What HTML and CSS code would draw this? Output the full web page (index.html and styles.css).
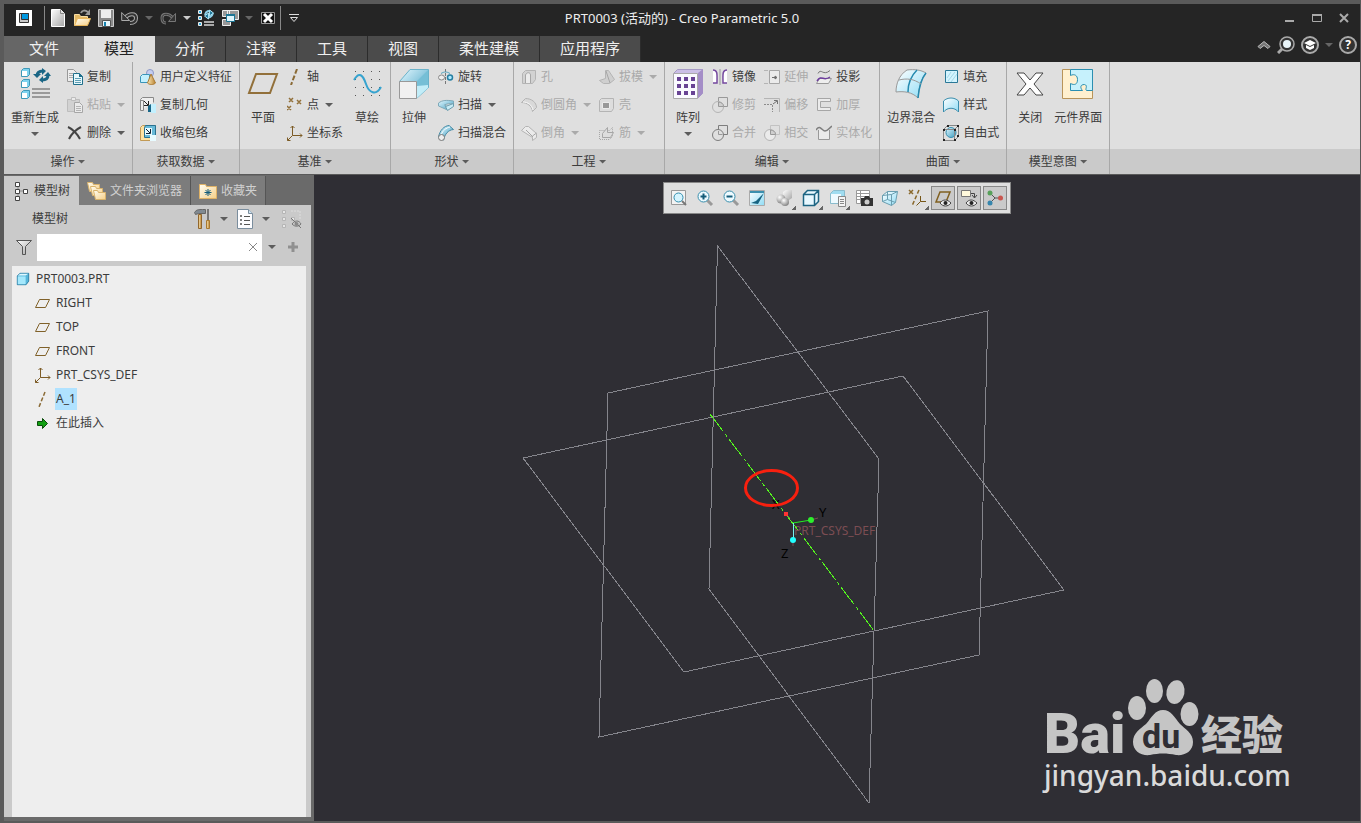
FILE: index.html
```html
<!DOCTYPE html>
<html lang="zh-CN">
<head>
    <meta charset="utf-8">
    <title>PRT0003 (活动的) - Creo Parametric 5.0</title>
    <link rel="stylesheet" href="styles.css">
</head>
<body>
    <!-- Shared gradients -->
    <svg class="defs" width="0" height="0">
        <defs>
            <linearGradient id="blue" x1="0" y1="0" x2="1" y2="1"><stop offset="0" stop-color="#fff"/><stop offset="1" stop-color="#8fdcf5"/></linearGradient>
            <linearGradient id="teal" x1="0" y1="0" x2="1" y2="1"><stop offset="0" stop-color="#e4f8ff"/><stop offset="1" stop-color="#3b9cc0"/></linearGradient>
            <linearGradient id="folder" x1="0" y1="0" x2="1" y2="1"><stop offset="0" stop-color="#fffdf2"/><stop offset="1" stop-color="#f5cf88"/></linearGradient>
            <linearGradient id="gray" x1="0" y1="0" x2="1" y2="1"><stop offset="0" stop-color="#fff"/><stop offset="1" stop-color="#a5a5a5"/></linearGradient>
            <linearGradient id="gold" x1="0" y1="0" x2="1" y2="0"><stop offset="0" stop-color="#fbe7b4"/><stop offset="1" stop-color="#b98232"/></linearGradient>
            <radialGradient id="ball" cx="0.35" cy="0.3" r="0.8"><stop offset="0" stop-color="#fff"/><stop offset="1" stop-color="#777"/></radialGradient>
        </defs>
    </svg>

    <div class="window">
        <header class="titlebar">
            <div class="quick-access">
                <button class="app-button" aria-label="Creo"><svg width="16" height="16" viewBox="0 0 16 16"><path fill="#fff" d="M0 0h16v16H0z"/><path fill="#c8c8c8" stroke="#333" d="M3.500 3.500h9v9h-9z"/><path fill="#0098e0" stroke="#333" d="M5.500 3.500h7v6h-7z"/></svg></button>
                <span class="divider"></span>
                <button aria-label="新建"><svg width="18" height="18" viewBox="0 0 18 18"><path fill="url(#gray)" stroke="#fff" d="M2.500 .5h9l4 4v13h-13z"/><path fill="#ddd" stroke="#888" d="M11.500 .5v4h4"/></svg></button>
                <button aria-label="打开"><svg width="18" height="18" viewBox="0 0 18 18"><path fill="#e1b765" stroke="#f8dda2" d="M1.500 16.500v-11h5l1 2h7v3"/><path fill="url(#folder)" stroke="#e9b75c" d="M1.500 16.500l3-7h13l-3 7z"/><path fill="none" stroke="#999" stroke-width="2" d="M8 4c1-3 4-3 7-1"/><path fill="#999" d="M12 6h5V0z"/></svg></button>
                <button aria-label="保存"><svg width="18" height="18" viewBox="0 0 18 18"><path fill="#8a8a8a" stroke="#ccc" d="M1.500 .5h15v17h-15z"/><path fill="#eee" d="M4 1h10v8H4z"/><path fill="#e8f6fb" stroke="#555" d="M5.500 11.500h8v6h-8z"/><path fill="#1583b0" d="M7 13h2v4H7z"/></svg></button>
                <button aria-label="撤消"><svg width="18" height="16" viewBox="0 0 18 16"><path fill="none" stroke="#aaa" stroke-width="4" d="M4 8c4-5 11-5 11 0 0 3-2 5-6 5"/><path fill="none" stroke="#333" stroke-width="2" d="M4 8c4-5 11-5 11 0 0 3-2 5-6 5"/><path fill="#333" stroke="#aaa" d="M.7 2.500v8h8z"/></svg></button>
                <button class="narrow" aria-label="撤消列表"><span class="caret dim"></span></button>
                <button aria-label="重做"><svg width="18" height="16" viewBox="0 0 18 16"><path fill="none" stroke="#777" stroke-width="3" d="M14 8c-4-5-11-5-11 0 0 3 1 5 4 5"/><path fill="none" stroke="#333" d="M14 8c-4-5-11-5-11 0 0 3 1 5 4 5"/><path fill="#333" stroke="#777" d="M16.500 3.500v8h-7z"/></svg></button>
                <button class="narrow" aria-label="重做列表"><span class="caret light"></span></button>
                <button aria-label="重新生成"><svg width="18" height="18" viewBox="0 0 18 18"><path fill="#35aee0" stroke="#eee" d="M1.500 1.500h3v3h-3zM1.500 7.500h3v3h-3zM1.500 13.500h3v3h-3z"/><path stroke="#aaa" stroke-width="2" d="M7 13h10M7 16h10"/><path fill="none" stroke="#8ed0e8" stroke-width="2" d="M8 6c1-4 4-5 6-3M16 4c-1 4-4 5-6 4"/><path fill="#247a9b" stroke="#aadff0" d="M12.500 1v6l4-3zM11.500 4v6l-4-3z"/></svg></button>
                <button aria-label="窗口"><svg width="18" height="18" viewBox="0 0 18 18"><path fill="#999" stroke="#eee" d="M6.500 1.500h11v9h-11zM1.500 1.500h7v6h-7zM1.500 10.500h8v6h-8z"/><path fill="#dff5fc" stroke="#1c7695" d="M5.500 5.500h8v7h-8z"/><path fill="#1c7695" d="M5 5h9v2H5z"/></svg></button>
                <button class="narrow" aria-label="窗口列表"><span class="caret dim"></span></button>
                <button aria-label="关闭窗口"><svg width="14" height="14" viewBox="0 0 14 14"><path fill="#111" stroke="#999" d="M.5 1.500h13v11H.5z"/><path stroke="#fff" stroke-width="3" d="M3 3l8 8M11 3l-8 8"/></svg></button>
                <span class="divider"></span>
                <button aria-label="自定义"><svg width="10" height="8" viewBox="0 0 10 8"><path fill="none" stroke="#ddd" d="M0 .5h10M1.500 3.500h7l-3.500 4z"/></svg></button>
            </div>
            <h1 class="title">PRT0003 (活动的) - Creo Parametric 5.0</h1>
            <div class="window-buttons">
                <button aria-label="最小化"><svg width="12" height="12" viewBox="0 0 12 12"><path stroke="#aaa" stroke-width="2" d="M1 9h9"/></svg></button>
                <button aria-label="最大化"><svg width="12" height="12" viewBox="0 0 12 12"><path fill="none" stroke="#aaa" d="M1.500 2.500h9v7h-9z"/><path stroke="#aaa" stroke-width="2" d="M1 3h10"/></svg></button>
                <button aria-label="关闭"><svg width="12" height="12" viewBox="0 0 12 12"><path stroke="#aaa" stroke-width="2" d="M2 2l8 8M10 2l-8 8"/></svg></button>
            </div>
        </header>

        <nav class="tabs">
            <button class="tab file-tab">文件</button>
            <button class="tab active">模型</button>
            <button class="tab">分析</button>
            <button class="tab">注释</button>
            <button class="tab">工具</button>
            <button class="tab">视图</button>
            <button class="tab">柔性建模</button>
            <button class="tab">应用程序</button>
            <div class="help-buttons">
                <button aria-label="最小化功能区"><svg width="14" height="10" viewBox="0 0 14 10"><path fill="#777" stroke="#bbb" d="M1 6.500l6-5 6 5-2 2-4-3-4 3z"/></svg></button>
                <button aria-label="搜索"><svg width="18" height="18" viewBox="0 0 18 18"><path stroke="#aaa" stroke-width="3" d="M1 17l5-5"/><circle cx="10" cy="8" r="7" fill="#333" stroke="#aaa" stroke-width="1.500"/><circle cx="10" cy="8" r="4" fill="#e8f4f8"/></svg></button>
                <button aria-label="学习"><svg width="18" height="18" viewBox="0 0 18 18"><circle cx="9" cy="9" r="8" fill="#333" stroke="#aaa" stroke-width="2"/><path fill="#fff" d="M9 4l6 3-6 3-6-3zM5 9l4 2 4-2v3l-4 2-4-2z"/></svg></button>
                <button class="narrow" aria-label="学习列表"><span class="caret dim"></span></button>
                <button class="help" aria-label="帮助">?</button>
            </div>
        </nav>

        <div class="ribbon">
            <section class="group">
                <div class="group-body">
                    <button class="big">
                        <svg width="32" height="32" viewBox="0 0 32 32"><g fill="#7fd2ee" stroke="#3f99b8"><path d="M2.500 2.500l2-2h6v6l-2 2h-6zM2.500 13.500l2-2h6v6l-2 2h-6zM2.500 24.500l2-2h6v6l-2 2h-6z"/></g><path fill="#fff" d="M3 3h5v5H3zM3 14h5v5H3zM3 25h5v5H3z"/><path stroke="#999" stroke-width="2" d="M13 21h18M13 25h18M13 29h18"/><path fill="none" stroke="#1a6685" stroke-width="3" d="M18 8c0-4 3-5 6-5M29 7c0 4-3 5-6 5"/><path fill="#1a6685" d="M23 0v7l4-4zM24 8v7l-4-3zM14 6h8l-4 4zM25 8h7l-3-4z"/></svg>
                        <span>重新生成</span><i class="caret"></i>
                    </button>
                    <div class="column">
                        <button class="small"><svg width="16" height="16" viewBox="0 0 16 16"><path fill="#eee" stroke="#999" d="M.5 .5h6l3 3v9h-9z"/><path stroke="#aaa" d="M2 4.500h4M2 6.500h4M2 8.500h4"/><path fill="#e6f7fb" stroke="#1f6f8b" d="M6.500 4.500h6l3 3v8h-9z"/><path stroke="#5f9fb5" d="M8 9.500h6M8 11.500h6M8 13.500h6"/><path fill="#1f6f8b" d="M12 4v4h4z"/></svg>复制</button>
                        <button class="small" disabled><svg width="16" height="16" viewBox="0 0 16 16"><path fill="#d0d0d0" stroke="#b5b5b5" d="M.5 2.500h12v12H.5z"/><path fill="#eee" stroke="#b5b5b5" d="M4.500 .5h4v3h-4z"/><path fill="#eee" stroke="#999" d="M7.500 5.500h5l3 3v7h-8z"/><path stroke="#aaa" d="M9 9.500h5M9 11.500h5M9 13.500h5"/></svg>粘贴<i class="caret"></i></button>
                        <button class="small"><svg width="16" height="16" viewBox="0 0 16 16"><path fill="none" stroke="#444" stroke-width="2" d="M1 2c5 2 10 8 12 12M14 2C8 5 4 10 2 14"/></svg>删除<i class="caret"></i></button>
                    </div>
                </div>
                <h2>操作<i class="caret"></i></h2>
            </section>

            <section class="group">
                <div class="group-body">
                    <div class="column">
                        <button class="small"><svg width="16" height="16" viewBox="0 0 16 16"><circle cx="10" cy="4" r="3.500" fill="#c5cdf0" stroke="#8b97c6"/><path fill="#c3f0fe" stroke="#3a94b8" d="M.5 7.500l2-2h7v6l-2 2h-7z"/><path fill="url(#gold)" stroke="#a87832" d="M11 5l4.500 9c-2 2-6 2-8 0z"/></svg>用户定义特征</button>
                        <button class="small"><svg width="16" height="16" viewBox="0 0 16 16"><path fill="#eee" stroke="#888" d="M.5 13.500v-11l2-2h11v5M.5 3.500h3v10h-3"/><path fill="#c3f0fe" d="M11 7h5v9h-5z"/><path fill="#1a6788" d="M8 9l3-2v8H8z"/><path fill="none" stroke="#222" d="M4 4l4 4M8.500 4v4.500H4"/></svg>复制几何</button>
                        <button class="small"><svg width="16" height="16" viewBox="0 0 16 16"><path fill="#ffe2a2" stroke="#c29a55" d="M.5 2.500l2-2h13v12l-3 3H.5z"/><path fill="#68bad8" stroke="#2a7291" d="M4.500 2.500l1-2h10v10l-2 2h-9z"/><path fill="#e8fbff" d="M5 3h7v7H5zM10 10h6v6h-6z"/><path fill="none" stroke="#123" d="M6 4l4 4M10.500 4v4.500H6"/></svg>收缩包络</button>
                    </div>
                </div>
                <h2>获取数据<i class="caret"></i></h2>
            </section>

            <section class="group">
                <div class="group-body">
                    <button class="big">
                        <svg width="32" height="32" viewBox="0 0 32 32"><path fill="none" stroke="#92703a" stroke-width="2" d="M9 6h21l-7 19H2z"/></svg>
                        <span>平面</span>
                    </button>
                    <div class="column">
                        <button class="small"><svg width="16" height="16" viewBox="0 0 16 16"><path stroke="#8a6a35" stroke-width="2" stroke-dasharray="5 2" d="M10 0L4 16"/></svg>轴</button>
                        <button class="small"><svg width="16" height="16" viewBox="0 0 16 16"><path stroke="#92703a" stroke-width="1.500" d="M2 1l4 4M6 1L2 5M10 3l4 4M14 3l-4 4M0 9l4 4M4 9l-4 4"/></svg>点<i class="caret"></i></button>
                        <button class="small"><svg width="16" height="16" viewBox="0 0 16 16"><path fill="none" stroke="#7d5c26" d="M5.500 1v9.500H15M5.500 10.500l-5 5M3.500 3l2-2 2 2M13 8.500l2 2-2 2M.5 12.500v3h3"/></svg>坐标系</button>
                    </div>
                    <button class="big">
                        <svg width="32" height="32" viewBox="0 0 32 32"><path stroke="#555" stroke-dasharray="1 7" d="M4 3.500h26M4 11.500h26M4 19.500h26M4 27.500h26"/><path fill="none" stroke="#36a3cf" stroke-width="2" d="M3 12c5-9 9-5 12 4s10 12 15 3"/></svg>
                        <span>草绘</span>
                    </button>
                </div>
                <h2>基准<i class="caret"></i></h2>
            </section>

            <section class="group">
                <div class="group-body">
                    <button class="big">
                        <svg width="32" height="32" viewBox="0 0 32 32"><path fill="url(#teal)" stroke="#6bb3ca" d="M1.500 13.500L12 1.500h18.500v18l-12 11z"/><path fill="#76bfd6" d="M30 2v17l-11-1v-5z"/><path fill="#c2edf8" d="M30 17v3L19 30V18z"/><path fill="#f1f1f1" stroke="#999" d="M1.500 13.500h17v17h-17z"/></svg>
                        <span>拉伸</span>
                    </button>
                    <div class="column">
                        <button class="small"><svg width="16" height="16" viewBox="0 0 16 16"><path stroke="#777" stroke-dasharray="3 1" d="M7.500 0v16"/><ellipse cx="3.500" cy="8.500" rx="3" ry="2.500" fill="#eee" stroke="#888"/><circle cx="12" cy="8.500" r="2.500" fill="#aeeaff" stroke="#267ea1" stroke-width="1.500"/><path fill="none" stroke="#50a2bf" d="M3 4.500c3-2 6-2 9 0"/></svg>旋转</button>
                        <button class="small"><svg width="16" height="16" viewBox="0 0 16 16"><path fill="url(#teal)" stroke="#7fa9b8" d="M.5 6c4-3 8-3 15-2v3c-4-1-7 0-9 1l3 2v3l-9-4z"/><path fill="#c8ecf6" stroke="#6b9cad" d="M7.500 9.500l8-3v3l-6 4z"/></svg>扫描<i class="caret"></i></button>
                        <button class="small"><svg width="16" height="16" viewBox="0 0 16 16"><path fill="url(#teal)" stroke="#4488a2" d="M.5 12C2 5 6 1 11 .5l4.500 4C10 5 7 9 5.500 15z"/><path fill="none" stroke="#fff" d="M3 10c2-5 5-7 9-8"/><circle cx="3.500" cy="12.500" r="3" fill="#eee" stroke="#777"/></svg>扫描混合</button>
                    </div>
                </div>
                <h2>形状<i class="caret"></i></h2>
            </section>

            <section class="group">
                <div class="group-body">
                    <div class="column">
                        <button class="small" disabled><svg width="16" height="16" viewBox="0 0 16 16"><path fill="#d0d0d0" stroke="#aaa" d="M1.500 4.500l3-3h10v9l-3 4h-10z"/><path fill="#eee" stroke="#999" d="M4.500 14V6c1-3 5-3 5 0v8"/></svg>孔</button>
                        <button class="small" disabled><svg width="16" height="16" viewBox="0 0 16 16"><path fill="#d8d8d8" stroke="#aaa" d="M.5 5.500l4-4c6 0 11 4 11 9l-4 4C11 9 6 5.500 .5 5.500z"/><path fill="none" stroke="#fff" d="M2 5c5 0 9 3 10 8"/></svg>倒圆角<i class="caret"></i></button>
                        <button class="small" disabled><svg width="16" height="16" viewBox="0 0 16 16"><path fill="#eee" stroke="#aaa" d="M.5 5.500l4-4h3l8 7v4l-4 3v-3z"/><path fill="none" stroke="#999" d="M11.500 12v-1l4-3M11 11L5 5"/></svg>倒角<i class="caret"></i></button>
                    </div>
                    <div class="column">
                        <button class="small" disabled><svg width="16" height="16" viewBox="0 0 16 16"><path fill="#ccc" stroke="#aaa" d="M.5 11.500l6-2v-8h3l6 9-5 4h-6z"/><path fill="#eee" stroke="#999" d="M7 2l4 12"/></svg>拔模<i class="caret"></i></button>
                        <button class="small" disabled><svg width="16" height="16" viewBox="0 0 16 16"><path fill="#ddd" stroke="#aaa" d="M.5 3.500l2-2h12v10l-2 3H.5z"/><path fill="#888" stroke="#eee" d="M3.500 5.500h7v6h-7z"/></svg>壳</button>
                        <button class="small" disabled><svg width="16" height="16" viewBox="0 0 16 16"><path fill="none" stroke="#999" stroke-dasharray="1 1" d="M.5 5.500h10l3-3v9l-3 3H.5z"/><path fill="#ddd" stroke="#999" d="M3.500 8.500l5-6v5h6l-3 5h-8z"/></svg>筋<i class="caret"></i></button>
                    </div>
                </div>
                <h2>工程<i class="caret"></i></h2>
            </section>

            <section class="group">
                <div class="group-body">
                    <button class="big">
                        <svg width="32" height="32" viewBox="0 0 32 32"><path fill="#cbbfe6" stroke="#a79bc6" d="M1.500 5.500l4-4h25v24l-5 5z"/><path fill="#a48dc7" d="M26 5l5-4v24l-5 5z"/><path fill="#fafaff" stroke="#aaa" d="M1.500 5.500h24v25h-24z"/><path stroke="#684394" stroke-width="4" stroke-dasharray="4 3" d="M5 11h18M5 18h18M5 25h18"/></svg>
                        <span>阵列</span><i class="caret"></i>
                    </button>
                    <div class="column">
                        <button class="small"><svg width="16" height="16" viewBox="0 0 16 16"><path fill="#fff" stroke="#764aa0" stroke-width="1.500" d="M1 1c5 0 4 5 4 13H1M15 1c-5 0-4 5-4 13h4"/><path stroke="#999" d="M8 0v16"/></svg>镜像</button>
                        <button class="small" disabled><svg width="16" height="16" viewBox="0 0 16 16"><path fill="none" stroke="#888" d="M6.500 4V.5h9v9h-4"/><circle cx="6" cy="10" r="5.500" fill="none" stroke="#aaa"/><path fill="#ccc" stroke="#888" d="M6.500 5v4.500h5c0-3-2-4-5-4.500z"/></svg>修剪</button>
                        <button class="small" disabled><svg width="16" height="16" viewBox="0 0 16 16"><path fill="none" stroke="#666" d="M6.500 5v-4.500h9v9h-4"/><circle cx="6" cy="10" r="5.500" fill="none" stroke="#666"/><path fill="none" stroke="#888" d="M6.500 6v3.500h4"/></svg>合并</button>
                    </div>
                    <div class="column">
                        <button class="small" disabled><svg width="16" height="16" viewBox="0 0 16 16"><path fill="#eee" stroke="#999" d="M5.500 1.500h10v13h-10z"/><path stroke="#aaa" stroke-dasharray="4 1" d="M0 1.500h5M0 14.500h5"/><path fill="#555" stroke="#555" d="M8 8.500h4M11 7l2 1.500-2 1.500z"/></svg>延伸</button>
                        <button class="small" disabled><svg width="16" height="16" viewBox="0 0 16 16"><path fill="#ddd" d="M0 1h16v14h-7V7H0z"/><path fill="none" stroke="#aaa" d="M0 1.500h15.500V15"/><path fill="none" stroke="#777" stroke-dasharray="2 1" d="M0 7.500h8.500V15"/><path fill="none" stroke="#555" d="M9 7l4-3M10 3.500h3.500V7"/></svg>偏移</button>
                        <button class="small" disabled><svg width="16" height="16" viewBox="0 0 16 16"><path fill="none" stroke="#bbb" d="M6.500 .5h9v9h-9z"/><circle cx="6" cy="10" r="5.500" fill="#eee" stroke="#aaa"/><path fill="#ccc" stroke="#888" d="M6.500 5v4.500h5c0-3-2-4-5-4.500z"/></svg>相交</button>
                    </div>
                    <div class="column">
                        <button class="small"><svg width="16" height="16" viewBox="0 0 16 16"><path fill="none" stroke="#777" d="M2 4.500c3-6 5 3 12-3"/><path fill="#eee" stroke="#999" d="M.5 14.500l3-5h12l-3 5z"/><path fill="none" stroke="#6d3c9d" stroke-width="1.500" d="M1 12c5-7 6 1 13-4"/></svg>投影</button>
                        <button class="small" disabled><svg width="16" height="16" viewBox="0 0 16 16"><path fill="#eee" stroke="#999" d="M1.500 1.500h13v3h-10v6h10v3h-13z"/></svg>加厚</button>
                        <button class="small" disabled><svg width="16" height="16" viewBox="0 0 16 16"><path fill="#eee" stroke="#888" d="M2.500 5v9.500h11V5"/><path fill="none" stroke="#666" stroke-width="1.500" d="M0 5c4-6 6 1 9 1 3 0 4-3 7-5"/></svg>实体化</button>
                    </div>
                </div>
                <h2>编辑<i class="caret"></i></h2>
            </section>

            <section class="group">
                <div class="group-body">
                    <button class="big">
                        <svg width="32" height="32" viewBox="0 0 32 32"><path fill="url(#blue)" stroke="#999" d="M1 24C1 16 4 7 12 2c8-1 14 0 19 3-5 6-7 14-8 25-6-6-14-7-22-6z"/><path fill="none" stroke="#248aaf" stroke-width="1.500" d="M22 2c-6 6-9 13-9 22M31 5c-5 6-7 14-8 25"/><path fill="none" stroke="#999" d="M4 12c8-2 15-1 22 4"/></svg>
                        <span>边界混合</span>
                    </button>
                    <div class="column">
                        <button class="small"><svg width="16" height="16" viewBox="0 0 16 16"><path fill="#d4f4fe" stroke="#2a7897" d="M2.500 1.500h12v12h-12z"/><path stroke="#a3d8ea" d="M4 9l4-6M5 12l7-9M8 13l6-8"/></svg>填充</button>
                        <button class="small"><svg width="16" height="16" viewBox="0 0 16 16"><path fill="url(#blue)" stroke="#3a8dac" d="M.5 4c4-4 11-4 15 0v11c-4-5-11-5-15 0z"/></svg>样式</button>
                        <button class="small"><svg width="16" height="16" viewBox="0 0 16 16"><circle cx="8" cy="7.500" r="5" fill="url(#teal)" stroke="#358eaf"/><path fill="none" stroke="#888" d="M.5 4.500h11v11H.5zM4.500 .5h11v11M.5 4.500l4-4M11.500 4.500l4-4M11.500 15.500l4-4"/><path fill="#222" d="M0 4h2v2H0zM11 4h2v2h-2zM0 14h2v2H0zM11 14h2v2h-2zM14 0h2v2h-2zM4 0h2v2H4zM14 10h2v2h-2z"/></svg>自由式</button>
                    </div>
                </div>
                <h2>曲面<i class="caret"></i></h2>
            </section>

            <section class="group">
                <div class="group-body">
                    <button class="big">
                        <svg width="32" height="32" viewBox="0 0 32 32"><path fill="#fff" stroke="#444" d="M3 5h7l6 7 6-7h7L20 16l9 11h-7l-6-7-6 7H3l9-11z"/></svg>
                        <span>关闭</span>
                    </button>
                    <button class="big">
                        <svg width="32" height="32" viewBox="0 0 32 32"><path fill="#fff0cf" stroke="#b8945a" d="M.5 1.500h30v29H.5z"/><path fill="#c6f1fc" stroke="#2b8fb1" d="M8.500 1.500h22v21h-6c-2-1 2-5-2-6-5 0-4 4-2 6h-12v-7c4 2 7 1 7-4 0-4-3-6-7-4z"/></svg>
                        <span>元件界面</span>
                    </button>
                </div>
                <h2>模型意图<i class="caret"></i></h2>
            </section>
            <div class="group filler"><div class="group-body"></div><div class="group-foot"></div></div>
        </div>

        <main class="workspace">
            <aside class="sidebar">
                <div class="side-tabs">
                    <button class="side-tab active"><svg width="16" height="20" viewBox="0 0 16 20"><path fill="none" stroke="#888" d="M4 4v12M4 10h6"/><path fill="#fff" stroke="#444" d="M1.500 1.500h4v4h-4zM1.500 8.500h4v4h-4zM1.500 15.500h4v4h-4zM9.500 8.500h4v4h-4z"/></svg>模型树</button>
                    <button class="side-tab"><svg width="19" height="18" viewBox="0 0 19 18"><g fill="url(#folder)" stroke="#d9b36c"><path d="M.5 .5h5l1 2h6v7h-10z"/><path d="M3.500 4.500h5l1 2h6v7h-10z"/><path d="M6.500 8.500h4l1 2h7v7H8.500z"/></g></svg>文件夹浏览器</button>
                    <button class="side-tab"><svg width="18" height="16" viewBox="0 0 18 16"><path fill="url(#folder)" stroke="#dfb266" d="M.5 1.500h6l1 2h10v12H.5z"/><path stroke="#135c7c" d="M9 6v7M5.500 9.500h7M6.500 7l5 5M11.500 7l-5 5"/></svg>收藏夹</button>
                </div>
                <div class="panel">
                    <div class="tree-header">
                        <h3>模型树</h3>
                        <button aria-label="设置"><svg width="18" height="20" viewBox="0 0 18 20"><path fill="#808a92" stroke="#666" d="M.5 3.500c2-3 4-3 8-3h3v4h-7l-3 1z"/><path fill="url(#gold)" stroke="#91662c" d="M4.500 5.500h3v14h-3z"/><path stroke="#777" stroke-width="2" d="M14 0v11"/><path fill="url(#gold)" stroke="#a8792f" d="M12.500 11.500h3v8h-3z"/></svg></button>
                        <button class="menu" aria-label="设置列表"><span class="caret"></span></button>
                        <button aria-label="显示"><svg width="18" height="20" viewBox="0 0 18 20"><path fill="#fdfdff" stroke="#7a8d9d" d="M1.500 .5h11l4 4v15h-15z"/><path fill="#cfe3f1" stroke="#7a8d9d" d="M12.500 .5v4h4"/><path fill="none" stroke="#555" d="M4.500 6.500h1v1h-1zM4.500 10.500h1v1h-1zM4.500 14.500h1v1h-1zM8 7.500h6M8 11.500h6M8 15.500h6"/></svg></button>
                        <button class="menu" aria-label="显示列表"><span class="caret"></span></button>
                        <button class="hide" aria-label="隐藏" disabled><svg width="20" height="20" viewBox="0 0 20 20"><path fill="#e6e6e6" stroke="#b5b5b5" d="M.5 1.500h3v3h-3zM.5 8.500h3v3h-3zM.5 15.500h3v3h-3zM9.500 8.500h3v3h-3z"/><path fill="none" stroke="#ddd" stroke-dasharray="2 1" d="M9 2h9v8"/><path fill="none" stroke="#777" d="M10 15c3-4 7-4 9 0-3 3-6 3-9 0zM9 9l10 10"/><circle cx="14.500" cy="15" r="2" fill="#888"/></svg></button>
                    </div>
                    <div class="filter-row">
                        <svg width="16" height="16" viewBox="0 0 16 16"><path fill="url(#gray)" stroke="#555" d="M.5 1.500h15l-6 6v8h-3v-8z"/></svg>
                        <label class="search-box"><input type="text" aria-label="过滤模型树"><button aria-label="清除"><svg width="8" height="8" viewBox="0 0 8 8"><path stroke="#888" d="M0 0l8 8M8 0L0 8"/></svg></button></label>
                        <button class="menu" aria-label="过滤列表"><span class="caret"></span></button>
                        <button aria-label="添加"><svg width="12" height="12" viewBox="0 0 12 12"><path stroke="#909090" stroke-width="3" d="M6 1v10M1 6h10"/></svg></button>
                    </div>
                    <ul class="tree">
                        <li class="root"><svg width="14" height="14" viewBox="0 0 16 16"><path fill="#56b6da" stroke="#2278a0" d="M1.500 4.500l3-3h10v9l-3 4h-10z"/><path fill="#a5e8fc" d="M2 5h9v9H2z"/><path fill="#dff8ff" d="M2 4l3-2h9l-3 2z"/></svg><span>PRT0003.PRT</span></li>
                        <li><svg width="16" height="16" viewBox="0 0 16 16"><path fill="none" stroke="#806129" d="M4.500 4.500h10l-4 8h-10z"/></svg><span>RIGHT</span></li>
                        <li><svg width="16" height="16" viewBox="0 0 16 16"><path fill="none" stroke="#806129" d="M4.500 4.500h10l-4 8h-10z"/></svg><span>TOP</span></li>
                        <li><svg width="16" height="16" viewBox="0 0 16 16"><path fill="none" stroke="#806129" d="M4.500 4.500h10l-4 8h-10z"/></svg><span>FRONT</span></li>
                        <li><svg width="16" height="16" viewBox="0 0 16 16"><path fill="none" stroke="#7d5c26" d="M5.500 1v9.500H15M5.500 10.500l-5 5M3.500 3l2-2 2 2M13 8.500l2 2-2 2M.5 12.500v3h3"/></svg><span>PRT_CSYS_DEF</span></li>
                        <li><svg width="16" height="16" viewBox="0 0 16 16"><path stroke="#8a6a35" stroke-width="1.500" stroke-dasharray="4 2" d="M10 1L4 16"/></svg><span class="selected">A_1</span></li>
                        <li><svg width="16" height="16" viewBox="0 0 16 16"><path fill="#12a012" stroke="#0a4d0a" d="M2.500 6.500h5v-3l5 5-5 5v-3h-5z"/></svg><span>在此插入</span></li>
                    </ul>
                </div>
            </aside>

            <div class="canvas">
                <svg class="scene" viewBox="314 175 1046 646" preserveAspectRatio="xMinYMin meet">
                    <!-- Datum planes -->
                    <g fill="none" stroke="#85858c" shape-rendering="crispEdges">
                        <path d="M717.500 246L879 459L869 803L709 589z"/>
                        <path d="M608 393L988 311L979 655L599 737z"/>
                        <path d="M523 458L903 376L1064 590L684 672z"/>
                    </g>
                    <text class="csys-name" x="794" y="535">PRT_CSYS_DEF</text>
                    <text class="axis-name" x="772" y="509">X</text>
                    <text class="axis-name" x="819" y="517">Y</text>
                    <text class="axis-name" x="781" y="558">Z</text>
                    <!-- Axis A_1 and coordinate system -->
                    <path stroke="#54f51e" stroke-dasharray="22 3 3 3" d="M710 414L875 632" shape-rendering="crispEdges"/>
                    <path stroke="#7c4d53" d="M811 520l7-2M793 540v6M786 514l4 4"/>
                    <path stroke="#22f022" d="M793 523l18-3"/>
                    <path stroke="#7ee" d="M793.500 523v17"/>
                    <circle cx="811" cy="520" r="3" fill="#2cf02c"/>
                    <circle cx="793" cy="540" r="3" fill="#2ff"/>
                    <path fill="#f33" d="M784 512h4v4h-4z"/>
                    <ellipse cx="771.500" cy="488" rx="26" ry="17.500" fill="none" stroke="#f8200f" stroke-width="3"/>
                    <!-- Watermark -->
                    <g fill="#c5c5c5">
                        <text class="mark-bai" x="1044" y="753">Bai</text>
                        <ellipse cx="1137" cy="708" rx="9" ry="12"/>
                        <ellipse cx="1154.500" cy="691" rx="8.500" ry="12"/>
                        <ellipse cx="1175.500" cy="692" rx="9" ry="12" transform="rotate(12 1175 692)"/>
                        <ellipse cx="1189.500" cy="714" rx="9" ry="12"/>
                        <path d="M1163 710c8 0 12 8 17 14 5 5 13 9 13 18 0 10-9 14-17 13-9-2-17-2-26 0-9 1-17-4-17-13s7-13 13-18c6-7 9-14 17-14z"/>
                        <text class="mark-du" x="1142" y="748">du</text>
                        <text class="mark-cn" x="1201" y="750">经验</text>
                    </g>
                    <text class="mark-url" x="1044" y="786">jingyan.baidu.com</text>
                </svg>

                <div class="view-toolbar">
                    <button aria-label="重新调整"><svg width="18" height="18" viewBox="0 0 18 18"><path fill="#f3f3f3" stroke="#999" d="M1.500 1.500h14v14h-14z"/><path stroke="#777" stroke-width="2" d="M12 12l4 4"/><circle cx="8.500" cy="8.500" r="4.500" fill="#d5f4fe" stroke="#338eae"/></svg></button>
                    <button aria-label="放大"><svg width="18" height="18" viewBox="0 0 18 18"><path stroke="#999" stroke-width="3" d="M11 11l5 5"/><circle cx="7.500" cy="7.500" r="5.500" fill="#eefaff" stroke="#398eac"/><path stroke="#155c79" stroke-width="2" d="M4.500 7.500h6M7.500 4.500v6"/></svg></button>
                    <button aria-label="缩小"><svg width="18" height="18" viewBox="0 0 18 18"><path stroke="#999" stroke-width="3" d="M11 11l5 5"/><circle cx="7.500" cy="7.500" r="5.500" fill="#eefaff" stroke="#398eac"/><path stroke="#155c79" stroke-width="2" d="M4.500 7.500h6"/></svg></button>
                    <button aria-label="重画"><svg width="18" height="18" viewBox="0 0 18 18"><path fill="url(#blue)" stroke="#aaa" d="M1.500 1.500h15v15h-15z"/><path fill="#3b8fae" d="M2 2h14v2H2z"/><path fill="#176381" d="M16 4L8 12l-5 2 7 1z"/></svg></button>
                    <button class="has-menu" aria-label="渲染选项"><svg width="18" height="18" viewBox="0 0 18 18"><path fill="url(#gray)" d="M8 3l3-2h6v8l-3 2H8z"/><circle cx="6" cy="10" r="4.500" fill="url(#ball)"/><circle cx="10" cy="13" r="4" fill="url(#ball)"/></svg></button>
                    <button class="has-menu" aria-label="显示样式"><svg width="18" height="18" viewBox="0 0 18 18"><path fill="#e8f8ff" stroke="#1d6583" stroke-width="1.500" d="M1.500 5.500l4-4h11v11l-4 4h-11zM1.500 5.500h11v11M12.500 5.500l4-4"/></svg></button>
                    <button class="has-menu" aria-label="已保存方向"><svg width="18" height="18" viewBox="0 0 18 18"><path fill="#9fdcf0" stroke="#8abccd" d="M1.500 4.500l3-3h11v11l-3 2h-11z"/><path fill="#eefaff" d="M2 5h10v9H2z"/><path fill="#f4f4f4" stroke="#888" d="M9.500 7.500h7v10h-7z"/><path stroke="#888" d="M11 10.500h4M11 12.500h4M11 14.500h4"/></svg></button>
                    <button aria-label="视图管理器"><svg width="18" height="18" viewBox="0 0 18 18"><path fill="#fff" stroke="#999" d="M1.500 1.500h13v13h-13zM1 4.500h14M1 7.500h14M1 10.500h14M5.500 1v14"/><path fill="#333" d="M6 9h3l1-2h4l1 2h3v8H6z"/><circle cx="12" cy="13" r="2.500" fill="#ccc"/></svg></button>
                    <button aria-label="透视图"><svg width="18" height="18" viewBox="0 0 18 18"><path fill="url(#blue)" stroke="#6a9eb0" d="M1.500 6.500l5-4h10l-2 11-4 3-9-4z"/><path fill="none" stroke="#6a9eb0" d="M1.500 6.500l9-1 6-3M10.500 5.500v11M6.500 2.500v8l-5 2M6.500 10.500l8 3"/></svg></button>
                    <button class="has-menu" aria-label="基准显示过滤器"><svg width="18" height="18" viewBox="0 0 18 18"><path fill="none" stroke="#8a692d" stroke-width="1.500" d="M1 1l4 4M5 1L1 5"/><path stroke="#8a692d" stroke-width="1.500" stroke-dasharray="4 2" d="M11 1L4 17"/><path fill="none" stroke="#765617" d="M12.500 7v5.500H18M12.500 12.500l-4 4"/></svg></button>
                    <button class="pressed" aria-label="平面显示"><svg width="18" height="18" viewBox="0 0 18 18"><path fill="none" stroke="#806020" stroke-width="1.500" d="M6 3h10l-4 10H2z"/><path fill="#eee" stroke="#444" d="M6 14c3-4 7-4 11 0-3 4-8 4-11 0z"/><circle cx="11.500" cy="14" r="2" fill="#222"/></svg></button>
                    <button class="pressed" aria-label="注释显示"><svg width="18" height="18" viewBox="0 0 18 18"><path fill="#fff9dc" stroke="#777" d="M1.500 1.500h9v6h-9z"/><path fill="none" stroke="#444" d="M11 4.500h3.500v4M12 6l2.500 3L17 6"/><path fill="#eee" stroke="#444" d="M6 14c3-4 7-4 11 0-3 4-8 4-11 0z"/><circle cx="11.500" cy="14" r="2" fill="#222"/></svg></button>
                    <button class="pressed" aria-label="旋转中心"><svg width="18" height="18" viewBox="0 0 18 18"><path fill="none" stroke="#555" d="M4 4l5 5M9 9l-5 5M9 9h6"/><circle cx="4" cy="4" r="2.500" fill="#57a05a"/><circle cx="4" cy="14" r="2.500" fill="#3686ad"/><circle cx="14.500" cy="9" r="2.500" fill="#c9564f"/></svg></button>
                </div>
            </div>
        </main>
    </div>
</body>
</html>
```
FILE: styles.css
```css
* {
    box-sizing: border-box;
}
body {
    margin: 0;
    font-family: "Noto Sans", "Noto Sans CJK SC", sans-serif;
    font-size: 12px;
    line-height: 16px;
    color: #3c3c3c;
    background-color: #5a5a5a;
}
button {
    padding: 0;
    border: none;
    background: none;
    color: inherit;
    font: inherit;
    cursor: pointer;
}
svg {
    display: block;
    flex: none;
}
h1, h2, h3, ul {
    margin: 0;
    padding: 0;
    font-size: inherit;
    font-weight: normal;
}
.defs {
    position: absolute;
}
.window {
    display: flex;
    flex-direction: column;
    height: 100vh;
    padding: 4px 1px 2px 4px;
}
.caret {
    display: inline-block;
    width: 8px;
    height: 4px;
    background-color: #5c5c5c;
    clip-path: polygon(0 0, 100% 0, 50% 100%);
}
.caret.dim {
    background-color: #666;
}
.caret.light {
    background-color: #ccc;
}

/* Title bar */
.titlebar {
    display: grid;
    grid-template-columns: 1fr auto 1fr;
    align-items: center;
    height: 32px;
    padding-bottom: 4px;
    background-color: #252525;
}
.quick-access {
    display: flex;
    align-items: center;
}
.quick-access button {
    display: flex;
    justify-content: center;
    width: 24px;
}
.quick-access .narrow {
    width: 14px;
}
.quick-access .app-button {
    width: 40px;
}
.divider {
    width: 1px;
    height: 24px;
    margin-right: 1px;
    background-color: #888;
}
.title {
    font-size: 13px;
    color: #eee;
}
.window-buttons {
    display: flex;
    justify-content: flex-end;
    gap: 15px;
    padding-right: 10px;
}

/* Ribbon tabs */
.tabs {
    display: flex;
    height: 26px;
    background-color: #252525;
}
.tab {
    padding: 0 20px 2px;
    border-right: 1px solid #2c2c2c;
    background-color: #4b4b4b;
    color: #f0f0f0;
    font-size: 15px;
}
.tab.file-tab {
    padding: 0 25px 2px;
    border-right: none;
    background-color: #666;
}
.tab.active {
    border-right: none;
    padding-right: 21px;
    background-color: #dfdfdf;
    color: #222;
}
.help-buttons {
    display: flex;
    align-items: center;
    gap: 6px;
    margin-left: auto;
    padding: 0 3px 8px 0;
}
.help-buttons .narrow {
    display: flex;
}
.help {
    width: 18px;
    height: 18px;
    border: 2px solid #aaa;
    border-radius: 9px;
    background-color: #333;
    color: #fff;
    font-weight: bold;
    line-height: 14px;
}

/* Ribbon */
.ribbon {
    display: flex;
    height: 113px;
    border-bottom: 1px solid #5a5a5a;
    background-color: #dfdfdf;
}
.group {
    display: flex;
    flex-direction: column;
    border-right: 1px solid #a8a8a8;
}
.group-body {
    display: flex;
    flex: 1;
    gap: 8px;
    padding: 0 7px;
}
.group h2, .group-foot {
    display: flex;
    align-items: center;
    justify-content: center;
    gap: 3px;
    height: 25px;
    background-color: #cacaca;
}
.filler {
    flex: 1;
    border-right: none;
}
.big {
    display: flex;
    flex-direction: column;
    align-items: center;
    min-width: 32px;
    padding-top: 6px;
}
.big span {
    margin-top: 10px;
}
.big .caret {
    margin-top: 6px;
}
.column {
    display: flex;
    flex-direction: column;
    padding-top: 1px;
}
.small {
    display: flex;
    align-items: center;
    gap: 4px;
    height: 28px;
    white-space: nowrap;
}
.small .caret {
    margin-left: 2px;
}
.small:disabled {
    color: #aaa;
}
.small:disabled svg {
    opacity: 0.8;
}
.small:disabled .caret {
    background-color: #aaa;
}

/* Sidebar */
.workspace {
    display: flex;
    flex: 1;
    min-height: 0;
}
.sidebar {
    display: flex;
    flex-direction: column;
    width: 310px;
    padding: 1px 3px 4px 0;
    background-color: #6a6a6a;
}
.side-tabs {
    display: flex;
    height: 29px;
}
.side-tab {
    display: flex;
    align-items: center;
    gap: 4px;
    padding: 0 8px;
    border-right: 1px solid #555;
    background-color: #7c7c7c;
    color: #d0d0d0;
}
.side-tab.active {
    padding: 0 9px 0 10px;
    border-right: none;
    background-color: #cacaca;
    color: #3c3c3c;
}
.panel {
    display: flex;
    flex: 1;
    flex-direction: column;
    padding: 0 5px 0 8px;
    background-color: #cacaca;
}
.tree-header {
    display: flex;
    align-items: center;
    height: 28px;
    padding-right: 4px;
}
.tree-header h3 {
    flex: 1;
    padding-left: 20px;
}
.menu {
    display: flex;
    justify-content: center;
    width: 24px;
}
.tree-header .hide {
    margin-left: 4px;
}
.filter-row {
    display: flex;
    align-items: center;
    gap: 5px;
    height: 28px;
    margin-bottom: 5px;
    padding: 0 7px 0 4px;
}
.filter-row .menu {
    width: 10px;
}
.filter-row > button:last-child {
    margin-left: 5px;
}
.search-box {
    display: flex;
    align-items: center;
    flex: 1;
    height: 27px;
    padding-right: 5px;
    background-color: #fff;
}
.search-box input {
    flex: 1;
    min-width: 0;
    border: none;
    outline: none;
    font: inherit;
}
.tree {
    flex: 1;
    padding-top: 1px;
    background-color: #eee;
    list-style: none;
}
.tree li {
    display: flex;
    align-items: center;
    gap: 4px;
    height: 24px;
    padding-left: 23px;
}
.tree .root {
    gap: 5px;
    padding-left: 4px;
}
.tree span {
    padding: 3px 1px;
}
.tree .selected {
    background-color: #b0e2ff;
}

/* Graphics area */
.canvas {
    position: relative;
    flex: 1;
    background-color: #2f2e34;
}
.scene {
    width: 100%;
    height: 100%;
}
.csys-name {
    fill: #7c4d53;
    font-size: 12px;
}
.axis-name {
    fill: #000;
    font-size: 13px;
}
.mark-bai {
    font: 900 56px Roboto, sans-serif;
}
.mark-du {
    fill: #2f2e34;
    font: bold 34px Roboto, sans-serif;
}
.mark-cn {
    font: 900 41px "Noto Sans CJK SC", sans-serif;
}
.mark-url {
    fill: #dadada;
    font: 500 28px "Noto Sans", sans-serif;
}
.view-toolbar {
    position: absolute;
    top: 7px;
    left: 50%;
    display: flex;
    gap: 2px;
    padding: 3px;
    border: 1px solid #888;
    background-color: #dfdfdf;
    transform: translateX(-50%);
}
.view-toolbar button {
    display: flex;
    align-items: center;
    justify-content: center;
    width: 24px;
    height: 24px;
}
.view-toolbar .has-menu {
    width: 25px;
    background: linear-gradient(135deg, transparent 50%, #666 50%) right bottom / 4px 4px no-repeat;
}
.view-toolbar .pressed {
    border: 1px solid #888;
    background-color: #cacaca;
}
```
